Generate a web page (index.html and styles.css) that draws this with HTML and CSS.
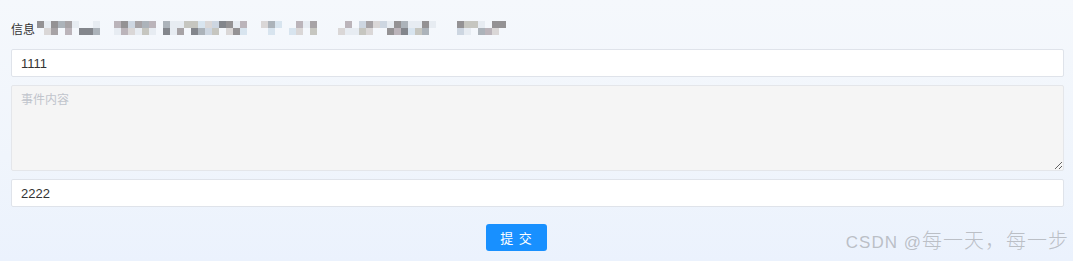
FILE: index.html
```html
<!DOCTYPE html>
<html lang="zh-CN">
<head>
  <meta charset="UTF-8">
  <meta name="viewport" content="width=device-width, initial-scale=1.0">
  <title>事件上报</title>
  <link rel="stylesheet" href="styles.css">
</head>
<body>
  <div class="page">
    <!-- 信息提示 -->
    <div class="info-row">
      <span class="info-label">信息</span>
      <span class="mosaic" id="mosaic"></span>
    </div>

    <form class="event-form" onsubmit="return false">
      <input class="field" type="text" value="1111">
      <textarea class="field area" placeholder="事件内容" disabled></textarea>
      <input class="field" type="text" value="2222">
      <div class="actions">
        <button class="submit-button" type="submit">提 交</button>
      </div>
    </form>

    <div class="watermark"><span class="wm-latin">CSDN @</span>每一天，每一步</div>
  </div>

  <script>
    // 打码區域（隱藏原始文字）
    const palette = ['#d8d4d4', '#b5adb3', '#9f9a9d', '#c9d3df', '#e6ebf2', '#8a8889', '#a5acb3', '#c2c1ba', '#d6e3ee', '#777a80'];
    const gaps = [9, 10, 30, 31, 41, 42, 57, 58, 59];
    const mosaic = document.getElementById('mosaic');
    let seed = 7;
    function rand() {
      seed = (seed * 9301 + 49297) % 233280;
      return seed / 233280;
    }
    for (let i = 0; i < 67; i++) {
      const col = document.createElement('span');
      col.className = 'mosaic-col';
      for (let r = 0; r < 2; r++) {
        const cell = document.createElement('span');
        cell.className = 'mosaic-cell';
        if (!gaps.includes(i) && rand() > 0.18) {
          cell.style.background = palette[Math.floor(rand() * palette.length)];
        }
        col.appendChild(cell);
      }
      mosaic.appendChild(col);
    }
  </script>
</body>
</html>
```

FILE: styles.css
```css
body {
  margin: 0;
  font-family: "Liberation Sans", "Noto Sans CJK SC", sans-serif;
  background: linear-gradient(180deg, #f5f8fc 0%, #f0f5fc 60%, #ebf2fd 100%);
  color: #333;
}

.page {
  position: relative;
  height: 261px;
  padding: 0 9px 0 11px;
  box-sizing: border-box;
  overflow: hidden;
}

/* 信息提示 */
.info-row {
  display: flex;
  align-items: center;
  height: 20px;
  padding-top: 18px;
  margin-bottom: 11px;
}

.info-label {
  font-size: 12px;
  color: #333;
}

.mosaic {
  display: flex;
  margin-left: 2px;
  opacity: 0.9;
}

.mosaic-col {
  display: flex;
  flex-direction: column;
}

.mosaic-cell {
  width: 7px;
  height: 7px;
}

/* 表单 */
.event-form {
  display: flex;
  flex-direction: column;
  gap: 8px;
}

.field {
  display: block;
  width: 100%;
  height: 28px;
  box-sizing: border-box;
  margin: 0;
  padding: 0 9px;
  border: 1px solid #dfe3ea;
  border-radius: 2px;
  background: #fff;
  font-family: inherit;
  font-size: 13px;
  color: #333;
  outline: none;
}

.area {
  height: 86px;
  padding: 4px 9px;
  background: #f5f5f5;
  border-color: #e4e6ea;
  resize: vertical;
  font-size: 12px;
}

.area::placeholder {
  color: #c0c4cc;
}

.actions {
  display: flex;
  justify-content: center;
  padding: 9px 42px 0 0;
}

.submit-button {
  width: 61px;
  height: 27px;
  padding: 0;
  border: none;
  border-radius: 3px;
  background: #1890ff;
  color: #fff;
  font-family: inherit;
  font-size: 13px;
  letter-spacing: 1px;
  cursor: pointer;
}

/* 水印 */
.watermark {
  position: absolute;
  right: 4px;
  bottom: 5px;
  font-family: "Noto Sans CJK SC", sans-serif;
  font-size: 20px;
  font-weight: 300;
  line-height: 26px;
  letter-spacing: 1px;
  color: rgba(165, 168, 173, 0.7);
  white-space: nowrap;
  pointer-events: none;
}

.wm-latin {
  font-family: "Liberation Sans", sans-serif;
  font-size: 17px;
}
```
